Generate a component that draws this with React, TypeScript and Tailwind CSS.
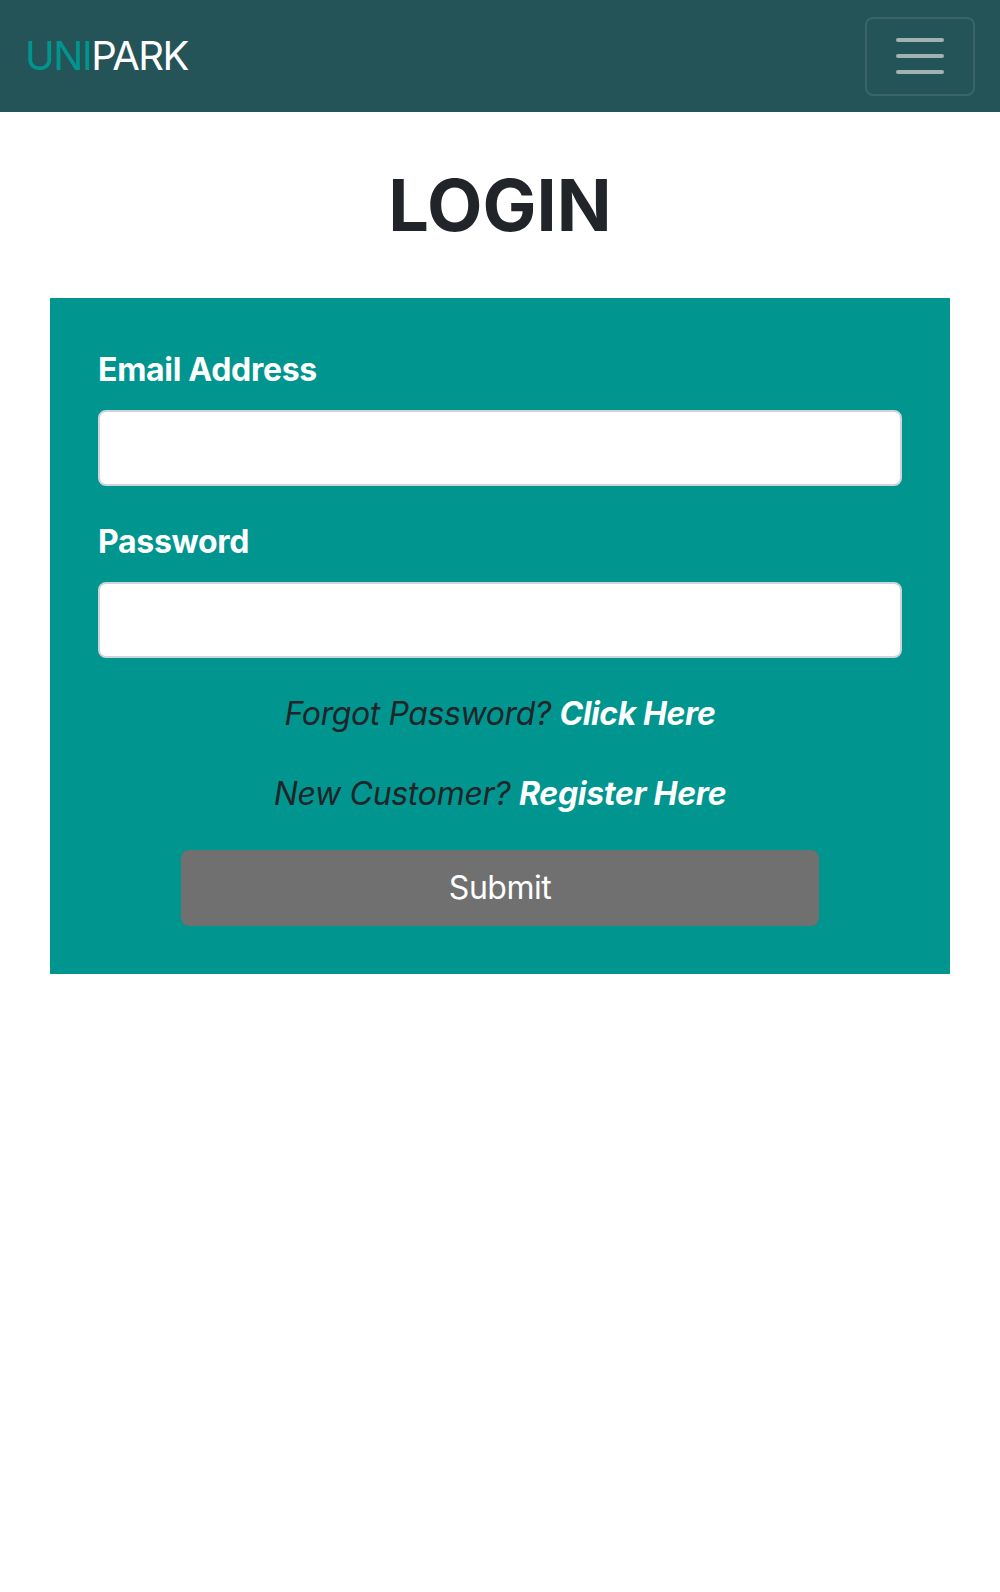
const App = () => {
  return (
    <div className="min-h-screen bg-white font-['Inter',sans-serif] text-[#212529]">
      {/* Navbar */}
      <nav className="h-[112px] bg-[#245358] flex items-center justify-between pl-[25px] pr-[25px]">
        <a className="text-[40px] leading-none tracking-[-1.5px] text-white">
          <span className="text-[#00958f]">UNI</span>PARK
        </a>
        <button className="w-[110px] h-[79px] border-2 border-white/10 rounded-lg flex flex-col items-center justify-center gap-3">
          <span className="block w-[48px] h-[4px] rounded-sm bg-[#9fb3b5]" />
          <span className="block w-[48px] h-[4px] rounded-sm bg-[#9fb3b5]" />
          <span className="block w-[48px] h-[4px] rounded-sm bg-[#9fb3b5]" />
        </button>
      </nav>

      <div className="px-[50px]">
        <h1 className="mt-[50px] mb-[50px] text-center text-[72px] leading-[86px] font-bold">LOGIN</h1>

        {/* Login card */}
        <div className="bg-[#00958f] p-[48px]">
          <label className="block text-[32px] leading-[48px] font-bold text-white tracking-[-0.3px] mb-4">Email Address</label>
          <input className="block w-full h-[76px] bg-white border-2 border-[#ced4da] rounded-lg mb-8 outline-none" type="email" />

          <label className="block text-[32px] leading-[48px] font-bold text-white tracking-[-0.3px] mb-4">Password</label>
          <input className="block w-full h-[76px] bg-white border-2 border-[#ced4da] rounded-lg mb-8 outline-none" type="password" />

          <p className="text-center text-[32px] leading-[48px] italic tracking-[-0.4px] mb-8">
            Forgot Password? <a className="font-bold text-white">Click Here</a>
          </p>
          <p className="text-center text-[32px] leading-[48px] italic tracking-[-0.3px] mb-8">
            New Customer? <a className="font-bold text-white">Register Here</a>
          </p>

          <button className="block mx-auto w-[638px] h-[76px] rounded-lg bg-[#707070] text-white text-[32px] tracking-[-0.5px]">
            Submit
          </button>
        </div>
      </div>
    </div>
  );
};

export default App;
